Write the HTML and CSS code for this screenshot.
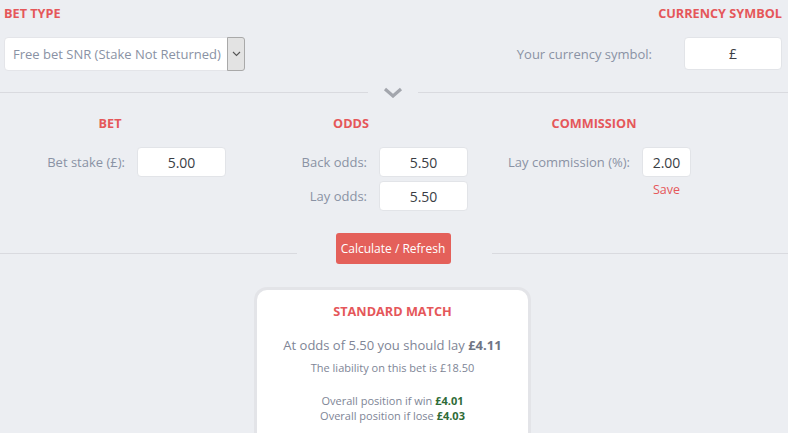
FILE: index.html
```html
<!DOCTYPE html>
<html>
<head>
<meta charset="utf-8">
<link rel="stylesheet" href="styles.css">
</head>
<body>
<div class="top">
  <div class="bet-type">
    <div class="heading">BET TYPE</div>
    <div class="select">
      <span class="select-text">Free bet SNR (Stake Not Returned)</span>
      <span class="select-btn"><svg width="9" height="6" viewBox="0 0 9 6"><path d="M1 1 L4.5 4.5 L8 1" fill="none" stroke="#555" stroke-width="1.1"/></svg></span>
    </div>
  </div>
  <div class="currency">
    <div class="heading">CURRENCY SYMBOL</div>
    <div class="cur-row">
      <span class="label">Your currency symbol:</span>
      <div class="input cur-input">£</div>
    </div>
  </div>
</div>

<div class="divider">
  <span class="line"></span>
  <svg class="chev" width="20" height="11" viewBox="0 0 20 11"><path d="M2 2 L10 9 L18 2" fill="none" stroke="#a3a6ad" stroke-width="3.2"/></svg>
  <span class="line"></span>
</div>

<div class="fields">
  <div class="col">
    <div class="heading col-head">BET</div>
    <div class="row">
      <span class="label lw">Bet stake (£):</span>
      <div class="input w88">5.00</div>
    </div>
  </div>
  <div class="col">
    <div class="heading col-head h2">ODDS</div>
    <div class="row">
      <span class="label lw">Back odds:</span>
      <div class="input w88">5.50</div>
    </div>
    <div class="row">
      <span class="label lw">Lay odds:</span>
      <div class="input w88">5.50</div>
    </div>
  </div>
  <div class="col">
    <div class="heading col-head">COMMISSION</div>
    <div class="row">
      <span class="label lw3">Lay commission (%):</span>
      <div class="comm">
        <div class="input w48">2.00</div>
        <div class="save">Save</div>
      </div>
    </div>
  </div>
</div>

<div class="calc">
  <span class="line"></span>
  <button class="btn">Calculate / Refresh</button>
  <span class="line"></span>
</div>

<div class="card">
  <div class="heading card-head">STANDARD MATCH</div>
  <div class="lay">At odds of 5.50 you should lay <b>£4.11</b></div>
  <div class="liab">The liability on this bet is £18.50</div>
  <div class="pos">Overall position if win <b>£4.01</b></div>
  <div class="pos">Overall position if lose <b>£4.03</b></div>
</div>
</body>
</html>
```

FILE: styles.css
```css
html, body {
  margin: 0;
  padding: 0;
  background: #eceef2;
  font-family: "Open Sans", "Liberation Sans", sans-serif;
  overflow: hidden;
}

.heading {
  color: #e5575a;
  font-weight: 700;
  font-size: 12.7px;
  line-height: 16px;
}

.label {
  color: #8a92a4;
  font-size: 13px;
}

.input {
  background: #fff;
  border: 1px solid #e2e4e8;
  border-radius: 4px;
  box-sizing: border-box;
  height: 30px;
  display: flex;
  align-items: center;
  justify-content: center;
  font-size: 14px;
  color: #3a3d44;
}

.top {
  display: flex;
  justify-content: space-between;
  padding: 5px 6px 0 4px;
}

.select {
  margin-top: 16px;
  width: 241px;
  height: 34px;
  display: flex;
  background: #fff;
  border: 1px solid #e4e5e9;
  border-radius: 4px;
  box-sizing: border-box;
}

.select-text {
  flex: 1;
  padding-left: 8px;
  font-size: 13px;
  color: #8a92a4;
  line-height: 32px;
  white-space: nowrap;
}

.select-btn {
  width: 16px;
  margin: -1px -1px -1px 0;
  background: #e3e3e3;
  border: 1px solid #a9a9a9;
  border-radius: 0 3px 3px 0;
  display: flex;
  align-items: center;
  justify-content: center;
}

.currency {
  display: flex;
  flex-direction: column;
  align-items: flex-end;
}

.cur-row {
  margin-top: 16px;
  display: flex;
  align-items: center;
  gap: 32px;
}

.cur-input {
  width: 98px;
  height: 33px;
}

.divider {
  margin-top: 11px;
  height: 20px;
  display: flex;
  align-items: center;
}

.line {
  flex: 1;
  height: 1px;
  background: #d9dadf;
}

.divider .line:first-child {
  flex: none;
  width: 368px;
}

.chev {
  margin: 0 15px;
  flex: none;
}

.fields {
  margin-top: 13px;
  display: grid;
  grid-template-columns: 242px 242px 1fr;
}

.col {
  display: flex;
  flex-direction: column;
  gap: 4px;
}

.col-head {
  width: 220px;
  text-align: center;
  margin-bottom: 12px;
}

.col-head.h2 {
  width: 218px;
}

.row {
  display: flex;
  align-items: flex-start;
  gap: 12px;
}

.row .label {
  line-height: 30px;
  text-align: right;
}

.lw {
  width: 125px;
}

.lw3 {
  width: 146px;
}

.w88 {
  width: 89px;
}

.w48 {
  width: 49px;
}

.comm {
  display: flex;
  flex-direction: column;
  align-items: center;
}

.save {
  margin-top: 5px;
  color: #e5575a;
  font-size: 12.5px;
  line-height: 16px;
}

.calc {
  margin-top: 22px;
  display: flex;
  align-items: flex-start;
}

.calc .line {
  margin-top: 20px;
}

.btn {
  margin: 0 41px 0 39px;
  width: 115px;
  height: 31px;
  border: none;
  border-radius: 3px;
  background: #e4605a;
  color: #fff;
  font-family: inherit;
  font-size: 12px;
  padding: 0;
}

.card {
  margin: 23px 0 0 254px;
  width: 277px;
  height: 200px;
  box-sizing: border-box;
  background: #fff;
  border: 3px solid #e3e4e8;
  border-radius: 13px;
  padding-top: 13px;
  text-align: center;
}

.card-head {
  margin-bottom: 17px;
}

.lay {
  color: #7e8596;
  font-size: 13px;
  line-height: 18px;
}

.lay b {
  color: #6f7584;
}

.liab {
  margin-top: 6px;
  color: #7e8596;
  font-size: 11px;
  line-height: 16px;
}

.pos {
  color: #7e8596;
  font-size: 11px;
  line-height: 15px;
}

.liab + .pos {
  margin-top: 17px;
}

.pos b {
  color: #2f6b37;
}
```
